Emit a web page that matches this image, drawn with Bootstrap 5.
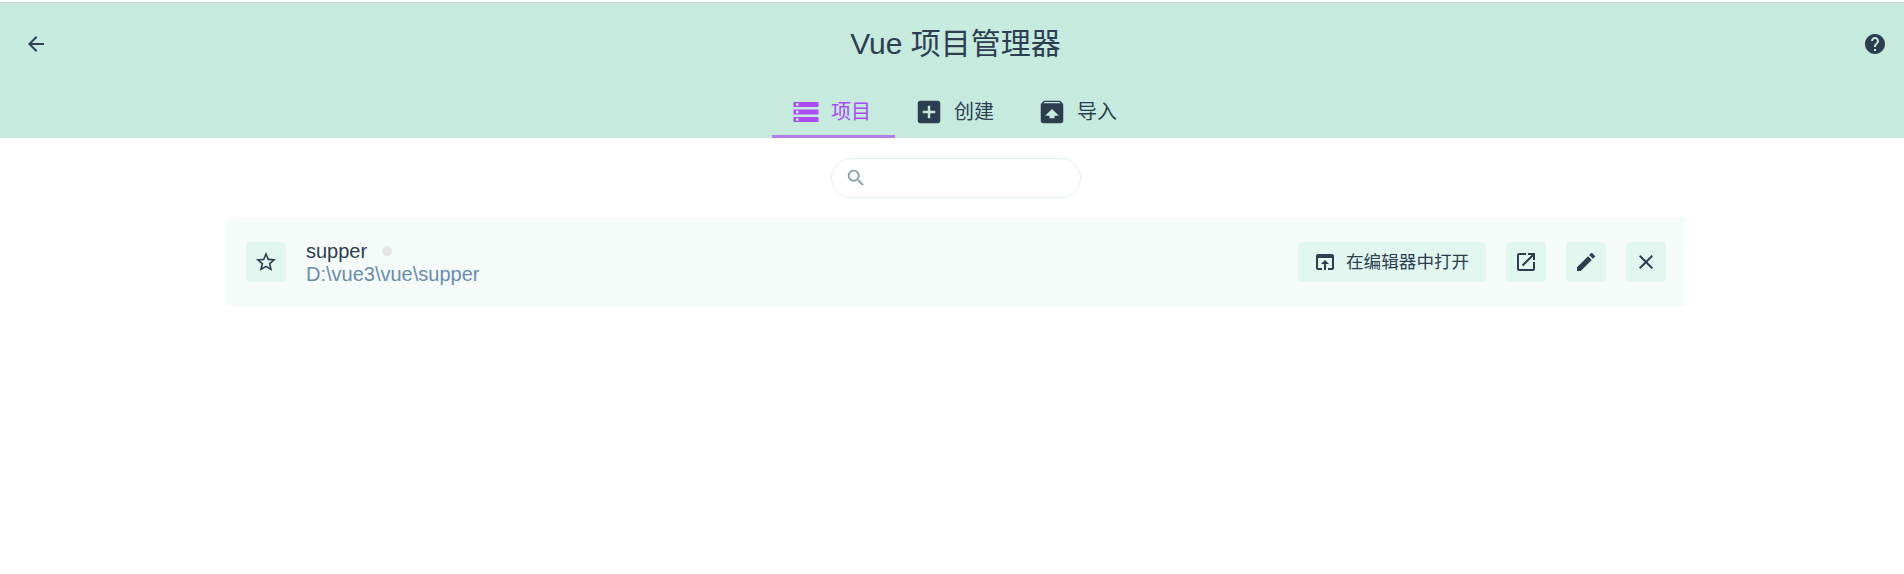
<!DOCTYPE html>
<html lang="zh">
<head>
<meta charset="utf-8">
<title>Vue 项目管理器</title>
<link href="https://cdn.jsdelivr.net/npm/bootstrap@5.3.0/dist/css/bootstrap.min.css" rel="stylesheet">
<style>
html,body{height:100%;background:#fff}
body{font-family:"Liberation Sans","Noto Sans CJK SC",sans-serif;color:#2c3e50;padding-top:2px;overflow:hidden}
svg{fill:currentColor;display:block;flex:none}
.hero{background:#c7eadf;height:136px;border-top:1px solid #d2d2d2}
.hero-top{display:grid;grid-template-columns:1fr auto 1fr;height:67px;padding:14px 17px 0 24px}
.hero-title{font-size:30px;font-weight:400;margin:0;line-height:53px;letter-spacing:0}
.ico-btn{color:#2c3e50;padding:0;border:0;background:none;line-height:0}
.ico-start{justify-self:start}
.ico-end{justify-self:end}
.tabbar{height:68px;padding-left:9px}
.tab-link{display:flex;align-items:center;gap:10px;height:68px;padding:18px 24px 0 19px;font-size:20px;color:#2c3e50;text-decoration:none;border-bottom:3px solid transparent}
.tab-link.on{color:#a94cf7;border-bottom-color:#b57cf0}
.page-main{padding-left:7px}
.searchbox{width:250px;height:40px;border:1px solid #e0f2ee;border-radius:20px;padding:0 13px;margin:20px auto 20px;color:#85a3b0}
.proj-row{width:1459px;height:88px;margin:0 auto;background:#f5fbf9;padding:0 19px 0 20px;gap:20px}
.tint-btn{height:40px;min-width:40px;background:#e2f7ef;border:0;border-radius:4px;color:#2c3e50;display:flex;align-items:center;justify-content:center;padding:0;font-size:17.6px}
.tint-btn.wide{width:188px;gap:9px;justify-content:flex-start;padding-left:15px}
.proj-info{padding-top:1px}
.proj-name{font-size:20px;line-height:22px;display:flex;align-items:center;gap:15px}
.proj-path{font-size:20px;line-height:24px;color:#6a8bad}
.dot-off{width:10px;height:10px;border-radius:50%;background:#e4e6e6}
</style>
</head>
<body>
<header class="hero">
  <div class="hero-top align-items-center">
    <button class="ico-btn ico-start" aria-label="返回"><svg width="24" height="24" viewBox="0 0 24 24"><path d="M20 11H7.83l5.59-5.59L12 4l-8 8 8 8 1.41-1.41L7.83 13H20v-2z"/></svg></button>
    <h1 class="hero-title">Vue 项目管理器</h1>
    <button class="ico-btn ico-end" aria-label="帮助"><svg width="24" height="24" viewBox="0 0 24 24"><path d="M12 2C6.48 2 2 6.48 2 12s4.48 10 10 10 10-4.48 10-10S17.52 2 12 2zm1 17h-2v-2h2v2zm2.07-7.75l-.9.92C13.45 12.9 13 13.5 13 15h-2v-.5c0-1.1.45-2.1 1.17-2.83l1.24-1.26c.37-.36.59-.86.59-1.41 0-1.1-.9-2-2-2s-2 .9-2 2H8c0-2.21 1.79-4 4-4s4 1.79 4 4c0 .88-.36 1.68-.93 2.25z"/></svg></button>
  </div>
  <nav class="tabbar d-flex justify-content-center">
    <a class="tab-link on" href="#"><svg width="30" height="30" viewBox="0 0 24 24"><path d="M2 20h20v-4H2v4zm2-3h2v2H4v-2zM2 4v4h20V4H2zm4 3H4V5h2v2zm-4 7h20v-4H2v4zm2-3h2v2H4v-2z"/></svg>项目</a>
    <a class="tab-link" href="#"><svg width="30" height="30" viewBox="0 0 24 24"><path d="M19 3H5c-1.11 0-2 .9-2 2v14c0 1.1.89 2 2 2h14c1.1 0 2-.9 2-2V5c0-1.1-.9-2-2-2zm-2 10h-4v4h-2v-4H7v-2h4V7h2v4h4v2z"/></svg>创建</a>
    <a class="tab-link" href="#"><svg width="30" height="30" viewBox="0 0 24 24"><path d="M20.55 5.22l-1.39-1.68C18.88 3.21 18.47 3 18 3H6c-.47 0-.88.21-1.15.55L3.46 5.22C3.17 5.57 3 6.01 3 6.5V19c0 1.1.89 2 2 2h14c1.1 0 2-.9 2-2V6.5c0-.49-.17-.93-.45-1.28zM12 9.5l5.5 5.5H14v2h-4v-2H6.5L12 9.5zM5.12 5l.82-1h12l.93 1H5.12z"/></svg>导入</a>
  </nav>
</header>
<main class="page-main">
  <div class="searchbox d-flex align-items-center"><svg width="22" height="22" viewBox="0 0 24 24"><path d="M15.5 14h-.79l-.28-.27C15.41 12.59 16 11.11 16 9.5 16 5.91 13.09 3 9.5 3S3 5.91 3 9.5 5.91 16 9.5 16c1.61 0 3.09-.59 4.23-1.57l.27.28v.79l5 4.99L20.49 19l-4.99-5zm-6 0C7.01 14 5 11.99 5 9.5S7.01 5 9.5 5 14 7.01 14 9.5 11.99 14 9.5 14z"/></svg></div>
  <div class="proj-row d-flex align-items-center">
    <button class="tint-btn" aria-label="收藏"><svg width="24" height="24" viewBox="0 0 24 24"><path d="M22 9.24l-7.19-.62L12 2 9.19 8.63 2 9.24l5.46 4.73L5.82 21 12 17.27 18.18 21l-1.63-7.03L22 9.24zM12 15.4l-3.76 2.27 1-4.28-3.32-2.88 4.38-.38L12 6.1l1.71 4.04 4.38.38-3.32 2.88 1 4.28L12 15.4z"/></svg></button>
    <div class="proj-info flex-grow-1">
      <div class="proj-name">supper <span class="dot-off"></span></div>
      <div class="proj-path">D:\vue3\vue\supper</div>
    </div>
    <button class="tint-btn wide"><svg width="24" height="24" viewBox="0 0 24 24"><path d="M19 4H5c-1.11 0-2 .9-2 2v12c0 1.1.89 2 2 2h4v-2H5V8h14v10h-4v2h4c1.1 0 2-.9 2-2V6c0-1.1-.89-2-2-2zm-7 6l-4 4h3v6h2v-6h3l-4-4z"/></svg>在编辑器中打开</button>
    <button class="tint-btn" aria-label="打开"><svg width="24" height="24" viewBox="0 0 24 24"><path d="M19 19H5V5h7V3H5c-1.11 0-2 .9-2 2v14c0 1.1.89 2 2 2h14c1.1 0 2-.9 2-2v-7h-2v7zM14 3v2h3.59l-9.83 9.83 1.41 1.41L19 6.41V10h2V3h-7z"/></svg></button>
    <button class="tint-btn" aria-label="编辑"><svg width="24" height="24" viewBox="0 0 24 24"><path d="M3 17.25V21h3.75L17.81 9.94l-3.75-3.75L3 17.25zM20.71 7.04c.39-.39.39-1.02 0-1.41l-2.34-2.34c-.39-.39-1.02-.39-1.41 0l-1.83 1.83 3.75 3.75 1.83-1.83z"/></svg></button>
    <button class="tint-btn" aria-label="删除"><svg width="24" height="24" viewBox="0 0 24 24"><path d="M19 6.41L17.59 5 12 10.59 6.41 5 5 6.41 10.59 12 5 17.59 6.41 19 12 13.41 17.59 19 19 17.59 13.41 12z"/></svg></button>
  </div>
</main>
<script src="https://cdn.jsdelivr.net/npm/bootstrap@5.3.0/dist/js/bootstrap.bundle.min.js"></script>
</body>
</html>
